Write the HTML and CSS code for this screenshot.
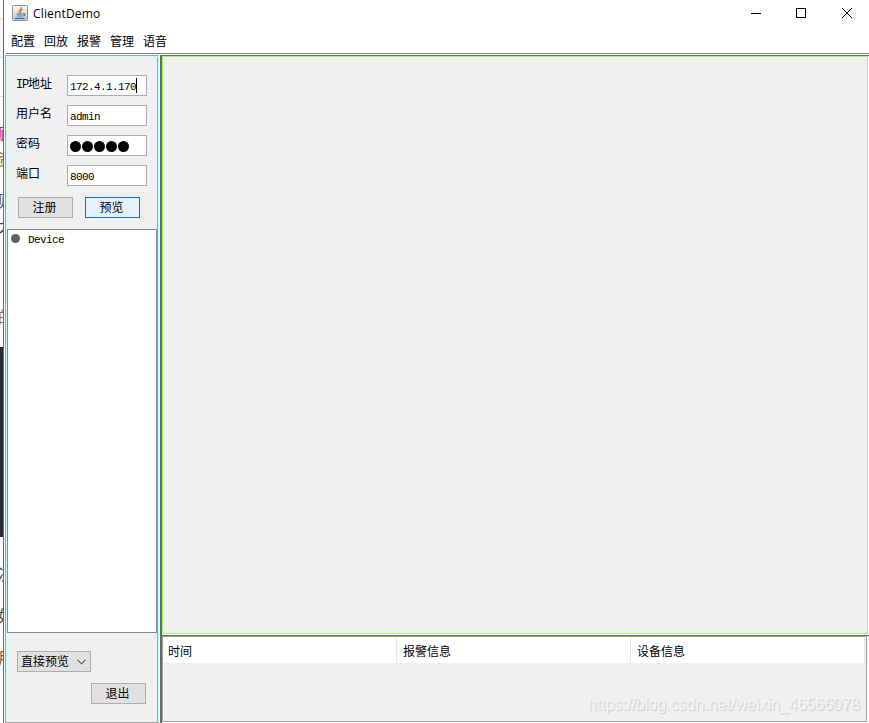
FILE: index.html
```html
<!DOCTYPE html>
<html lang="zh-CN">
<head>
<meta charset="utf-8">
<title>ClientDemo</title>
<link rel="stylesheet" href="styles.css">
</head>
<body>
<div class="desktop">
  <div class="behind">
    <div class="rules"></div>
    <span class="frag red">顾</span>
    <span class="frag orange">资</span>
    <span class="frag blue gap-l">则</span>
    <span class="frag gap-s">大</span>
    <span class="frag orange gap-xl">的</span>
    <div class="code"></div>
    <span class="frag gap-l">次</span>
    <span class="frag gap-l">如</span>
    <span class="frag brown gap-l">用</span>
  </div>
  <div class="window">
    <header class="titlebar">
      <svg class="java" width="16" height="16" viewBox="0 0 16 16">
        <defs><linearGradient id="g" x1="0" y1="0" x2="0" y2="1"><stop offset="0" stop-color="#f8fafc"/><stop offset="1" stop-color="#b4c8da"/></linearGradient></defs>
        <rect x=".5" y=".5" width="15" height="15" rx="1" fill="url(#g)" stroke="#8395a5"/>
        <path d="M9.5 2.200C10 4.500 5.500 5 7.200 8M10.800 4.300C8.300 5.300 8 6.200 9 8" fill="none" stroke="#ee7a20" stroke-width="1.4"/>
        <path d="M4.500 9h6M5 11h5M3 13.300h9.500M11 8.800c2.500-.4 2.300 1.800 0 2.200" fill="none" stroke="#3f6d92" stroke-width="1.200"/>
      </svg>
      <span class="title">ClientDemo</span>
      <svg class="controls" width="102" height="12" viewBox="0 0 102 12" fill="none" stroke="#000">
        <path d="M0 6.5h10"/>
        <rect x="45.500" y="1.500" width="9" height="9"/>
        <path d="M91 1l10 10M101 1L91 11"/>
      </svg>
    </header>
    <nav class="menu"><span>配置</span><span>回放</span><span>报警</span><span>管理</span><span>语音</span></nav>
    <main class="content">
      <aside class="side">
        <form class="login">
          <div class="row"><label><span class="mono">IP</span>地址</label><div class="field">172.4.1.170<i class="caret"></i></div></div>
          <div class="row"><label>用户名</label><div class="field">admin</div></div>
          <div class="row"><label>密码</label><div class="field dots"><i></i><i></i><i></i><i></i><i></i></div></div>
          <div class="row"><label>端口</label><div class="field">8000</div></div>
          <div class="buttons"><div class="btn">注册</div><div class="btn active">预览</div></div>
        </form>
        <div class="tree"><i class="node"></i><span>Device</span></div>
        <div class="actions">
          <div class="select">直接预览<svg width="9" height="6" viewBox="0 0 9 6"><path d="M.5.8l4 4 4-4" fill="none" stroke="#555" stroke-width="1.1"/></svg></div>
          <div class="btn exit">退出</div>
        </div>
      </aside>
      <section class="main">
        <div class="video"></div>
        <div class="alarms">
          <div class="thead"><span>时间</span><span>报警信息</span><span>设备信息</span></div>
          <div class="watermark">https://blog.csdn.net/weixin_46566078</div>
        </div>
      </section>
    </main>
  </div>
</div>
</body>
</html>
```
FILE: styles.css
```css
* { box-sizing: border-box; }
body { margin: 0; background: #fff; color: #000; font: 12px/16px "Liberation Sans", "Noto Sans CJK SC", sans-serif; overflow: hidden; }
.desktop { display: flex; width: 869px; height: 723px; }

/* sliver of the page behind the window */
.behind { width: 3px; overflow: hidden; display: flex; flex-direction: column; flex: none; }
.rules { height: 127px; flex: none; background: linear-gradient(#ddd, #ddd) 0 18px / 3px 1px no-repeat, linear-gradient(#ddd, #ddd) 0 57px / 3px 1px no-repeat, linear-gradient(#ddd, #ddd) 0 96px / 3px 1px no-repeat, linear-gradient(#f5f7f8, #f5f7f8) 0 19px / 3px 38px no-repeat; }
.frag { flex: none; width: 16px; height: 16px; margin: 0 0 9px -2px; font-size: 16px; line-height: 16px; color: #444; }
.red { color: #c7254e; background: #f9f2f4; }
.orange { color: #a86b2c; }
.brown { color: #8a5a30; }
.blue { color: #48607a; }
.gap-l { margin-top: 17px; }
.gap-s { margin-top: 0; }
.gap-xl { margin-top: 66px; }
.code { flex: none; height: 190px; margin: 12px 0 13px; background: #282c34; }

/* window frame */
.window { width: 866px; border-left: 1px solid #696969; display: flex; flex-direction: column; background: #fff; }
.titlebar { height: 27px; padding: 5px 16px 0 8px; display: flex; align-items: flex-start; }
.java { flex: none; }
.title { margin-left: 5px; font: 12px/17px "Open Sans", sans-serif; letter-spacing: .15px; }
.controls { margin: 2px 0 0 auto; }
.menu { height: 26px; padding: 7px 0 0 7px; display: flex; gap: 9px; }
.content { height: 670px; margin-left: 2px; border-top: 1px solid #777b7b; padding-top: 1px; display: flex; }

/* left panel */
.side { width: 154px; height: 668px; margin-left: -1px; border: 1px solid #a0a0a0; border-right-color: #c8ffff; box-shadow: inset 1px 1px #c8ffff, inset -1px 0 #a0a0a0; background: #f0f0f0; flex: none; padding: 1px 1px 0; }
.login { height: 172px; padding: 18px 0 0 9px; }
.row { height: 30px; display: flex; }
.row label { width: 51px; line-height: 19px; white-space: nowrap; }
.mono { font-family: "Liberation Mono", monospace; letter-spacing: -1.2px; }
.field { width: 80px; height: 21px; border: 1px solid #abadb3; background: #fff; padding: 3px 2px 0; font: 11px/16px "Liberation Mono", monospace; letter-spacing: -.6px; display: flex; }
.caret { width: 1px; height: 15px; background: #000; margin-top: -1px; }
.dots { gap: 1px; padding: 5px 2px 0; }
.dots i { width: 11px; height: 11px; border-radius: 50%; background: #000; }
.buttons { display: flex; gap: 12px; padding: 2px 0 0 2px; }
.btn { width: 55px; height: 21px; border: 1px solid #adadad; background: #e1e1e1; text-align: center; line-height: 21px; padding-right: 2px; }
.active { border-color: #0078d7; background: #e5f1fb; }
.tree { width: 150px; height: 404px; border: 1px solid #828790; background: #fff; display: flex; padding: 2px 3px; font: 11px/16px "Liberation Mono", monospace; letter-spacing: -.6px; }
.node { width: 9px; height: 9px; border-radius: 50%; background: #606060; margin: 2px 8px 0 0; }
.actions { padding: 18px 0 0 10px; }
.select { width: 74px; height: 21px; border: 1px solid #adadad; background: #e1e1e1; line-height: 21px; padding: 1px 4px 0 3px; display: flex; justify-content: space-between; align-items: center; }
.exit { margin: 11px 0 0 74px; }

/* video area and alarm list */
.main { margin-left: 1px; width: 709px; height: 668px; border-left: 2px solid #696969; border-top: 1px solid #696969; display: flex; flex-direction: column; }
.video { height: 578px; width: 706px; border: 1px solid #99ff66; background: #f0f0f0; }
.alarms { margin-top: 1px; border-top: 1px solid #696969; height: 87px; width: 707px; position: relative; }
.alarms::before { content: ""; display: block; box-sizing: border-box; width: 705px; height: 86px; border: 1px solid #a0a0a0; background: #f0f0f0; box-shadow: inset 1px 1px #fff; }
.thead { position: absolute; left: 2px; top: 2px; width: 701px; height: 25px; background: #fff; display: grid; grid-template-columns: 233px 234px 234px; line-height: 29px; }
.thead span { height: 25px; border-right: 1px solid #e5e5e5; padding-left: 6px; }
.thead span:first-child { padding-left: 4px; }
.watermark { position: absolute; right: 9px; bottom: 7px; font: 16px/20px "Liberation Sans", sans-serif; color: #f4f4f4; text-shadow: 1px 1px 1px #c8c8c8; }
```
